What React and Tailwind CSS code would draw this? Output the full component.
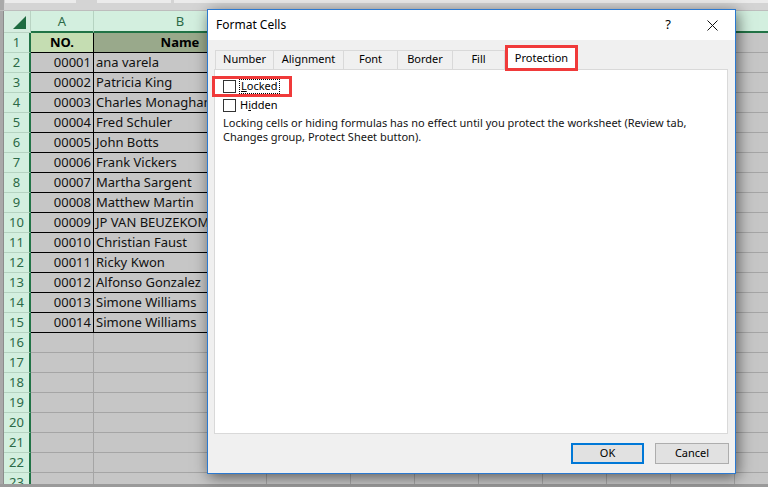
import React from "react";

const COLS =
  "grid grid-cols-[4px_27px_63px_173px_84px_64px_64px_64px_64px_64px_64px_64px]";

const people = [
  ["00001", "ana varela"],
  ["00002", "Patricia King"],
  ["00003", "Charles Monaghan"],
  ["00004", "Fred Schuler"],
  ["00005", "John Botts"],
  ["00006", "Frank Vickers"],
  ["00007", "Martha Sargent"],
  ["00008", "Matthew Martin"],
  ["00009", "JP VAN BEUZEKOM"],
  ["00010", "Christian Faust"],
  ["00011", "Ricky Kwon"],
  ["00012", "Alfonso Gonzalez"],
  ["00013", "Simone Williams"],
  ["00014", "Simone Williams"],
];

// only A and B show their letters; the rest sit behind the dialog
const letters = ["A", "B", "", "", "", "", "", "", "", ""];

function HeaderRow() {
  return (
    <div className={`${COLS} h-[22px]`}>
      <div className="bg-[#a9a9a9] border-r border-[#8c8c8c]" />
      {/* corner with the select-all triangle */}
      <div className="bg-[#d6ede0] border-r border-b border-[#b9d3c3] flex items-end justify-end pr-[4px] pb-[3px]">
        <svg width="13" height="13" viewBox="0 0 13 13">
          <polygon points="0,13 13,13 13,0" fill="#1f6b41" />
        </svg>
      </div>
      {letters.map((l, i) => (
        <div
          key={i}
          className="bg-[#d3efdf] border-r border-[#b5d3c1] border-b-2 border-b-[#217346] text-center text-[13px] leading-[20px] text-[#2c6a47]"
        >
          {l}
        </div>
      ))}
    </div>
  );
}

function Row({ n }) {
  const inData = n <= 15;
  const person = n >= 2 && n <= 15 ? people[n - 2] : null;
  const dataBorder = inData
    ? "border-r border-b border-black"
    : "border-r border-b border-[#a5a5a5]";

  return (
    <div className={`${COLS} h-[20px] text-[13px] leading-[19px]`}>
      <div className="bg-[#a9a9a9] border-r border-[#8c8c8c]" />
      <div className="bg-[#d3efdf] border-b border-[#b5d3c1] border-r-2 border-r-[#217346] text-center text-[#2c6a47]">
        {n}
      </div>

      {n === 1 ? (
        <div className={`${dataBorder} bg-[#c5ddb2] text-center font-bold text-black`}>
          NO.
        </div>
      ) : (
        <div className={`${dataBorder} bg-[#c6c6c6] text-right pr-[2px] text-[#111]`}>
          {person ? person[0] : ""}
        </div>
      )}

      {n === 1 ? (
        <div className={`${dataBorder} bg-[#99a98b] text-center font-bold text-black`}>
          Name
        </div>
      ) : (
        <div className={`${dataBorder} bg-[#c6c6c6] pl-[2px] whitespace-nowrap text-[#111]`}>
          {person ? person[1] : ""}
        </div>
      )}

      {[0, 1, 2, 3, 4, 5, 6, 7].map((i) => (
        <div key={i} className="bg-[#c6c6c6] border-r border-b border-[#a5a5a5]" />
      ))}
    </div>
  );
}

function Checkbox() {
  return <div className="w-[13px] h-[13px] border border-[#333] bg-white shrink-0" />;
}

function Tab({ label, w, active }) {
  if (active) {
    return (
      <div className={`${w} relative h-[23px] -mb-px bg-white border border-b-0 border-[#d9d9d9] flex items-center justify-center pb-[2px] z-10`}>
        {label}
        {/* red highlight around the selected tab */}
        <div className="absolute -left-px -right-px -top-[3px] -bottom-[1px] border-[3px] border-[#f03a3a]" />
      </div>
    );
  }
  return (
    <div className={`${w} h-[19px] border-t border-l border-[#d9d9d9] flex items-center justify-center pb-[1px]`}>
      {label}
    </div>
  );
}

function FormatCellsDialog() {
  return (
    <div className="absolute left-[207px] top-[9px] w-[529px] h-[465px] border border-[#2b79d0] bg-[#f0f0f0] shadow-[2px_3px_14px_rgba(0,0,0,0.55)] flex flex-col text-[11px] text-black font-['Noto_Sans',sans-serif]">
      {/* TITLE BAR */}
      <div className="h-[30px] bg-white flex items-center shrink-0">
        <span className="pl-[8px] text-[12px]">Format Cells</span>
        <div className="ml-auto flex h-full">
          <div className="w-[44px] flex items-center justify-center text-[13px]">?</div>
          <div className="w-[45px] flex items-center justify-center">
            <svg width="11" height="11" viewBox="0 0 11 11">
              <path d="M0.5 0.5 L10.5 10.5 M10.5 0.5 L0.5 10.5" stroke="#111" strokeWidth="1" />
            </svg>
          </div>
        </div>
      </div>

      {/* BODY */}
      <div className="flex-1 flex flex-col pl-[6px] pr-[6px]">
        <div className="mt-[7px] h-[22px] flex items-end pl-[1px]">
          <Tab label="Number" w="w-[58px]" />
          <Tab label="Alignment" w="w-[70px]" />
          <Tab label="Font" w="w-[54px]" />
          <Tab label="Border" w="w-[55px]" />
          <Tab label="Fill" w="w-[53px] border-r" />
          <Tab label="Protection" w="w-[73px]" active />
        </div>

        <div className="relative flex-1 bg-white border border-[#d9d9d9] mr-[1px] pl-[8px] pt-[7px]">
          <div className="h-[19px] flex items-center gap-[3px]">
            <Checkbox />
            <span className="border border-dotted border-black px-[1px] leading-[12px] pb-[1px]">
              <u>L</u>ocked
            </span>
          </div>
          <div className="h-[19px] flex items-center gap-[4px]">
            <Checkbox />
            <span>
              H<u>i</u>dden
            </span>
          </div>
          <p className="mt-[1px] leading-[14px] text-[#141414] whitespace-nowrap">
            Locking cells or hiding formulas has no effect until you protect the worksheet (Review tab,
            <br />
            Changes group, Protect Sheet button).
          </p>
          {/* red highlight around the Locked option */}
          <div className="absolute left-[-3px] top-[6px] w-[80px] h-[21px] border-[3px] border-[#f03a3a]" />
        </div>

        <div className="h-[39px] flex items-start justify-end gap-[11px] pt-[9px]">
          <button className="w-[73px] h-[21px] bg-[#e1e1e1] border-2 border-[#0078d7] flex items-center justify-center">
            OK
          </button>
          <button className="w-[74px] h-[21px] bg-[#e1e1e1] border border-[#adadad] flex items-center justify-center">
            Cancel
          </button>
        </div>
      </div>
    </div>
  );
}

export default function App() {
  const rows = [];
  for (let n = 1; n <= 23; n++) rows.push(n);

  return (
    <div className="relative w-[768px] h-[487px] overflow-hidden bg-[#c6c6c6] flex flex-col font-['Noto_Sans',sans-serif]">
      {/* top strip (formula bar remnants) */}
      <div className="h-[11px] shrink-0 flex bg-[#d4d4d4] border-b border-[#bdbdbd]">
        <div className="w-[4px] bg-[#a9a9a9]" />
        <div className="w-[71px] h-[3px] bg-[#ebebeb] ml-[1px]" />
        <div className="w-[74px] h-[3px] bg-[#ebebeb] ml-[21px]" />
        <div className="flex-1 h-[3px] bg-[#ebebeb] ml-[3px]" />
      </div>

      <div className="flex-1 overflow-hidden">
        <HeaderRow />
        {rows.map((n) => (
          <Row key={n} n={n} />
        ))}
      </div>
      <div className="h-[3px] shrink-0 bg-[#9a9a9a]" />

      <FormatCellsDialog />
    </div>
  );
}
